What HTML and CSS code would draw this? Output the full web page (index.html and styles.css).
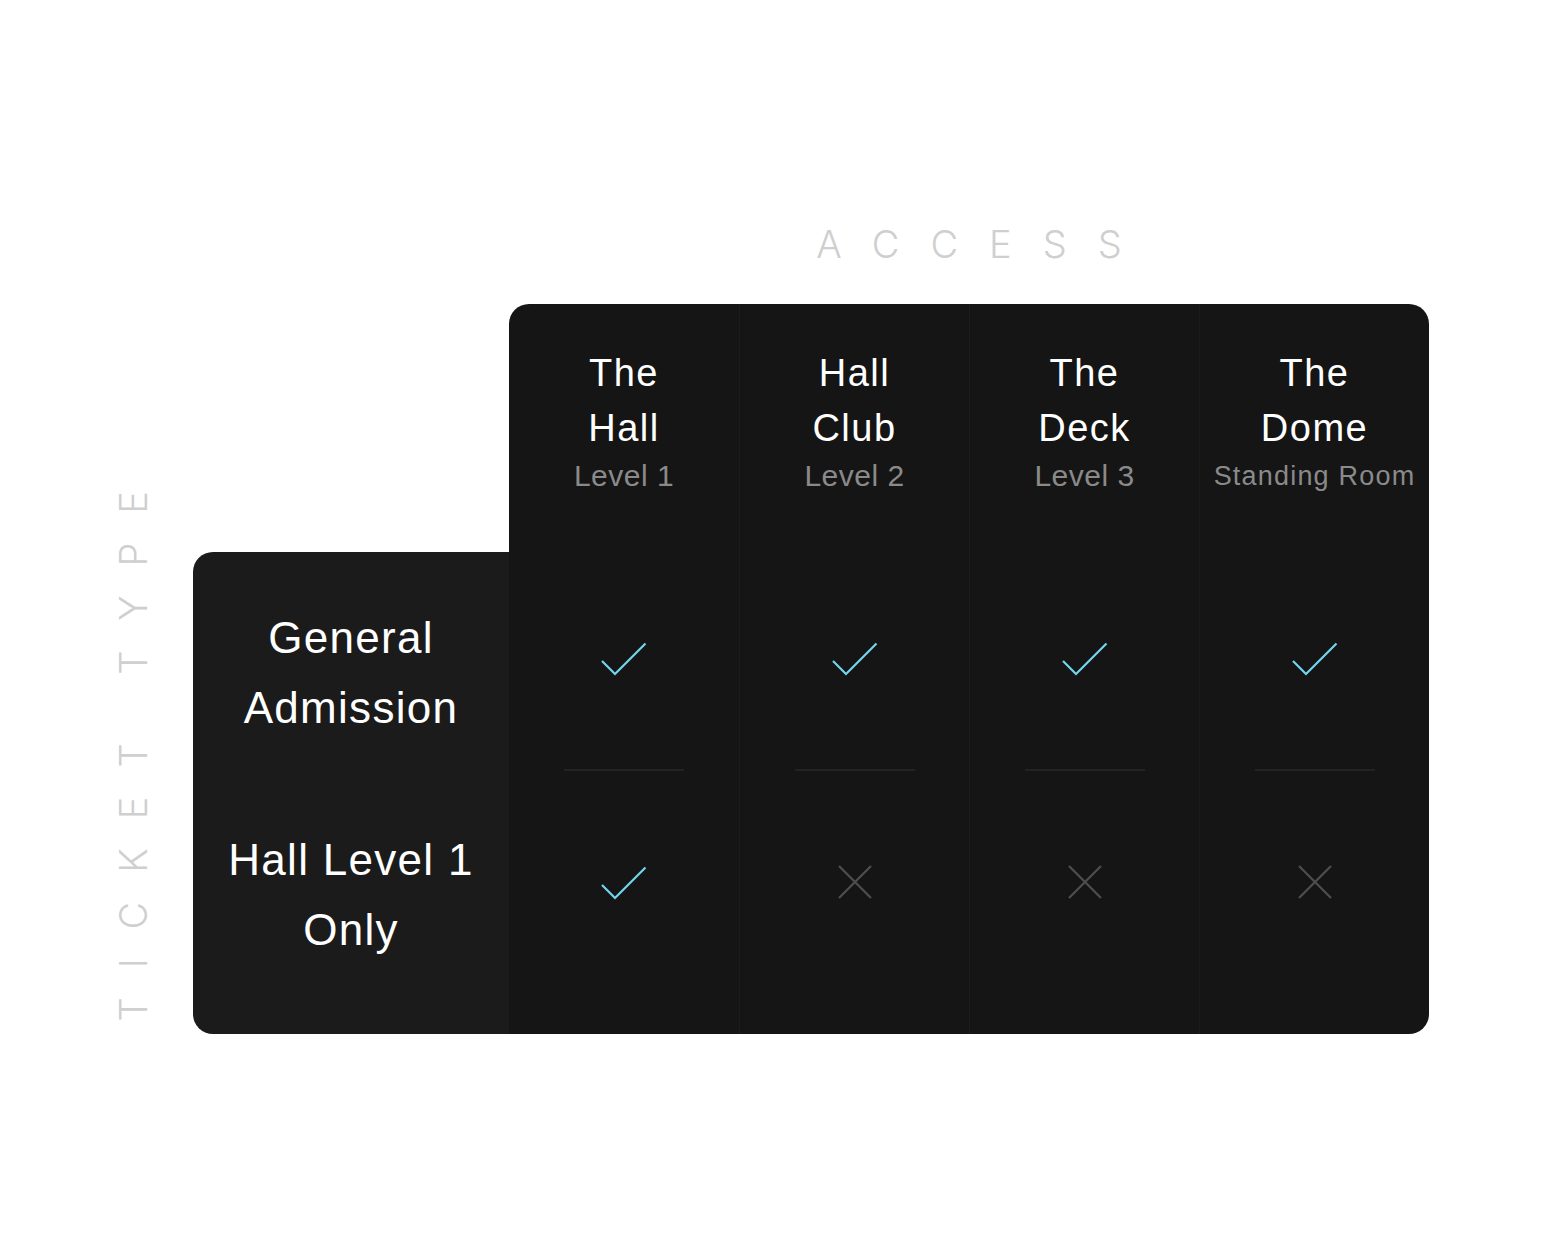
FILE: index.html
```html
<!DOCTYPE html>
<html lang="en">
<head>
<meta charset="utf-8">
<title>Access by Ticket Type</title>
<link rel="stylesheet" href="styles.css">
</head>
<body>
<main class="page">
  <div class="layout">
    <div class="axis axis--rows">TICKET TYPE</div>
    <div class="board">
      <div class="axis axis--cols">ACCESS</div>
      <div class="matrix">
        <div class="rowheads">
          <div class="rowhead">General<br>Admission</div>
          <div class="rowhead">Hall Level 1<br>Only</div>
        </div>
        <div class="columns">
          <div class="col">
            <div class="colhead">
              <div class="colname">The<br>Hall</div>
              <div class="colsub">Level 1</div>
            </div>
            <div class="cell"><svg class="icon icon--yes" width="48" height="36" viewBox="0 0 48 36"><path d="M2 21L15 34L45.5 3.5"/></svg></div>
            <div class="divider"></div>
            <div class="cell"><svg class="icon icon--yes" width="48" height="36" viewBox="0 0 48 36"><path d="M2 21L15 34L45.5 3.5"/></svg></div>
          </div>
          <div class="col">
            <div class="colhead">
              <div class="colname">Hall<br>Club</div>
              <div class="colsub">Level 2</div>
            </div>
            <div class="cell"><svg class="icon icon--yes" width="48" height="36" viewBox="0 0 48 36"><path d="M2 21L15 34L45.5 3.5"/></svg></div>
            <div class="divider"></div>
            <div class="cell"><svg class="icon icon--no" width="36" height="36" viewBox="0 0 36 36"><path d="M2 2L34 34M34 2L2 34"/></svg></div>
          </div>
          <div class="col">
            <div class="colhead">
              <div class="colname">The<br>Deck</div>
              <div class="colsub">Level 3</div>
            </div>
            <div class="cell"><svg class="icon icon--yes" width="48" height="36" viewBox="0 0 48 36"><path d="M2 21L15 34L45.5 3.5"/></svg></div>
            <div class="divider"></div>
            <div class="cell"><svg class="icon icon--no" width="36" height="36" viewBox="0 0 36 36"><path d="M2 2L34 34M34 2L2 34"/></svg></div>
          </div>
          <div class="col">
            <div class="colhead">
              <div class="colname">The<br>Dome</div>
              <div class="colsub colsub--small">Standing Room</div>
            </div>
            <div class="cell"><svg class="icon icon--yes" width="48" height="36" viewBox="0 0 48 36"><path d="M2 21L15 34L45.5 3.5"/></svg></div>
            <div class="divider"></div>
            <div class="cell"><svg class="icon icon--no" width="36" height="36" viewBox="0 0 36 36"><path d="M2 2L34 34M34 2L2 34"/></svg></div>
          </div>
        </div>
      </div>
    </div>
  </div>
</main>
</body>
</html>
```
FILE: styles.css
```css
* { box-sizing: border-box; }

body {
  margin: 0;
  background: #ffffff;
  font-family: "Liberation Sans", Arial, sans-serif;
  color: #ffffff;
}

.page {
  padding-top: 219px;
  display: flex;
  justify-content: center;
}

.layout {
  display: flex;
  align-items: flex-end;
  gap: 40px;
}

.axis {
  font-family: "Inter", "Liberation Sans", sans-serif;
  font-weight: 300;
  font-size: 38px;
  color: #cfcfcf;
  white-space: nowrap;
}

.axis--rows {
  width: 40px;
  line-height: 40px;
  writing-mode: vertical-rl;
  transform: rotate(180deg);
  letter-spacing: 29px;
  margin-bottom: 12px;
}

.board {
  display: flex;
  flex-direction: column;
}

.axis--cols {
  margin-left: 316px;
  width: 920px;
  height: 50px;
  line-height: 50px;
  text-align: center;
  letter-spacing: 31px;
  padding-left: 31px;
  margin-bottom: 35px;
}

.matrix {
  display: flex;
  align-items: flex-end;
}

.rowheads {
  width: 316px;
  background: #1b1b1b;
  border-radius: 20px 0 0 20px;
  padding: 10px 0 28px;
}

.rowhead {
  height: 222px;
  display: flex;
  align-items: center;
  justify-content: center;
  text-align: center;
  font-size: 44px;
  line-height: 70px;
  letter-spacing: 1.3px;
  color: #ffffff;
}

.columns {
  display: flex;
  background: #151515;
  border-radius: 20px 20px 20px 0;
  overflow: hidden;
}

.col {
  width: 230px;
  display: flex;
  flex-direction: column;
  align-items: center;
  padding-bottom: 41px;
}

.col + .col {
  border-left: 1px solid #1c1c1c;
}

.colhead {
  padding: 42px 0 51px;
  text-align: center;
}

.colname {
  font-size: 38px;
  line-height: 55px;
  letter-spacing: 1.5px;
  color: #ffffff;
}

.colsub {
  font-size: 30px;
  line-height: 40px;
  letter-spacing: 0.5px;
  color: #8a8a8a;
}

.colsub--small {
  font-size: 27px;
  letter-spacing: 1.2px;
}

.cell {
  align-self: stretch;
  height: 222px;
  display: flex;
  align-items: center;
  justify-content: center;
}

.divider {
  width: 120px;
  height: 2px;
  background: #232323;
}

.icon path {
  fill: none;
  stroke-width: 2.2;
}

.icon--yes path {
  stroke: #72d6ee;
}

.icon--no path {
  stroke: #4e4e4e;
}
```
